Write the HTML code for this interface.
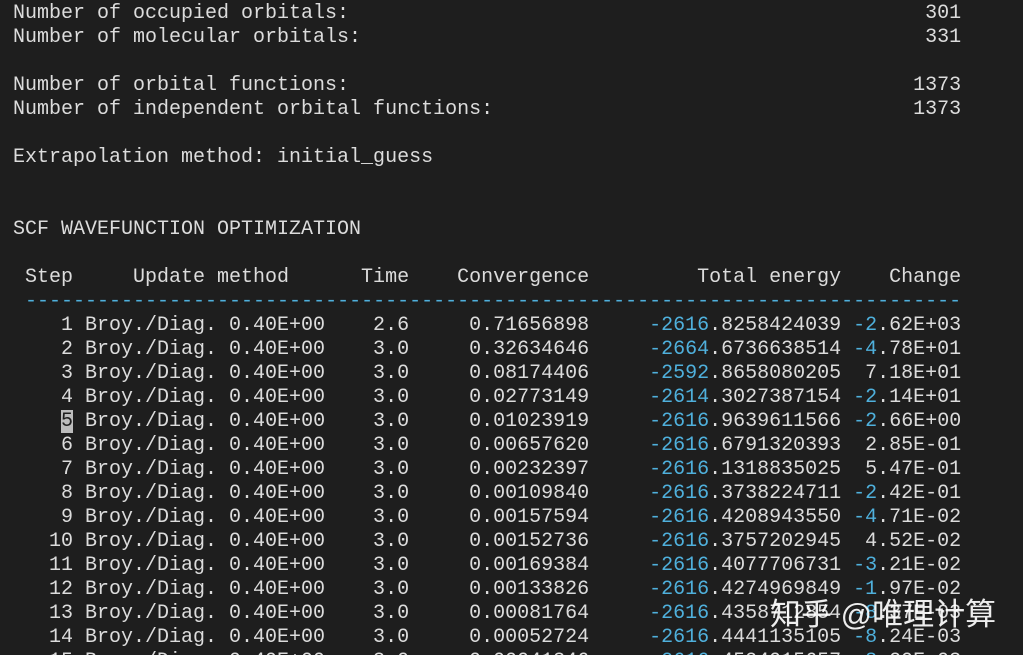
<!DOCTYPE html>
<html><head><meta charset="utf-8"><style>
html,body{margin:0;padding:0;background:#1e1e1e;width:1023px;height:655px;overflow:hidden}
pre{margin:0;padding:2px 0 0 1px;font-family:"Liberation Mono",monospace;font-size:20px;line-height:24px;color:#dcdcdc;white-space:pre}
.b{color:#4fb0dc}
.c{background:#bdbdbd;color:#1e1e1e}
.wm{position:absolute;left:770px;top:589px;font-family:"Liberation Sans","Noto Sans CJK SC",sans-serif;font-size:31px;color:rgba(255,255,255,0.92)}
</style></head><body>
<pre> Number of occupied orbitals:                                                301
 Number of molecular orbitals:                                               331

 Number of orbital functions:                                               1373
 Number of independent orbital functions:                                   1373

 Extrapolation method: initial_guess


 SCF WAVEFUNCTION OPTIMIZATION

  Step     Update method      Time    Convergence         Total energy    Change
  <span class="b">------------------------------------------------------------------------------</span>
     1 Broy./Diag. 0.40E+00    2.6     0.71656898     <span class="b">-2616</span>.8258424039 <span class="b">-2</span>.62E+03
     2 Broy./Diag. 0.40E+00    3.0     0.32634646     <span class="b">-2664</span>.6736638514 <span class="b">-4</span>.78E+01
     3 Broy./Diag. 0.40E+00    3.0     0.08174406     <span class="b">-2592</span>.8658080205  7.18E+01
     4 Broy./Diag. 0.40E+00    3.0     0.02773149     <span class="b">-2614</span>.3027387154 <span class="b">-2</span>.14E+01
     <span class="c">5</span> Broy./Diag. 0.40E+00    3.0     0.01023919     <span class="b">-2616</span>.9639611566 <span class="b">-2</span>.66E+00
     6 Broy./Diag. 0.40E+00    3.0     0.00657620     <span class="b">-2616</span>.6791320393  2.85E-01
     7 Broy./Diag. 0.40E+00    3.0     0.00232397     <span class="b">-2616</span>.1318835025  5.47E-01
     8 Broy./Diag. 0.40E+00    3.0     0.00109840     <span class="b">-2616</span>.3738224711 <span class="b">-2</span>.42E-01
     9 Broy./Diag. 0.40E+00    3.0     0.00157594     <span class="b">-2616</span>.4208943550 <span class="b">-4</span>.71E-02
    10 Broy./Diag. 0.40E+00    3.0     0.00152736     <span class="b">-2616</span>.3757202945  4.52E-02
    11 Broy./Diag. 0.40E+00    3.0     0.00169384     <span class="b">-2616</span>.4077706731 <span class="b">-3</span>.21E-02
    12 Broy./Diag. 0.40E+00    3.0     0.00133826     <span class="b">-2616</span>.4274969849 <span class="b">-1</span>.97E-02
    13 Broy./Diag. 0.40E+00    3.0     0.00081764     <span class="b">-2616</span>.4358712854 <span class="b">-8</span>.37E-03
    14 Broy./Diag. 0.40E+00    3.0     0.00052724     <span class="b">-2616</span>.4441135105 <span class="b">-8</span>.24E-03
    15 Broy./Diag. 0.40E+00    3.0     0.00041346     <span class="b">-2616</span>.4524015657 <span class="b">-8</span>.29E-03</pre>
<div class="wm">知乎 @唯理计算</div>
</body></html>
